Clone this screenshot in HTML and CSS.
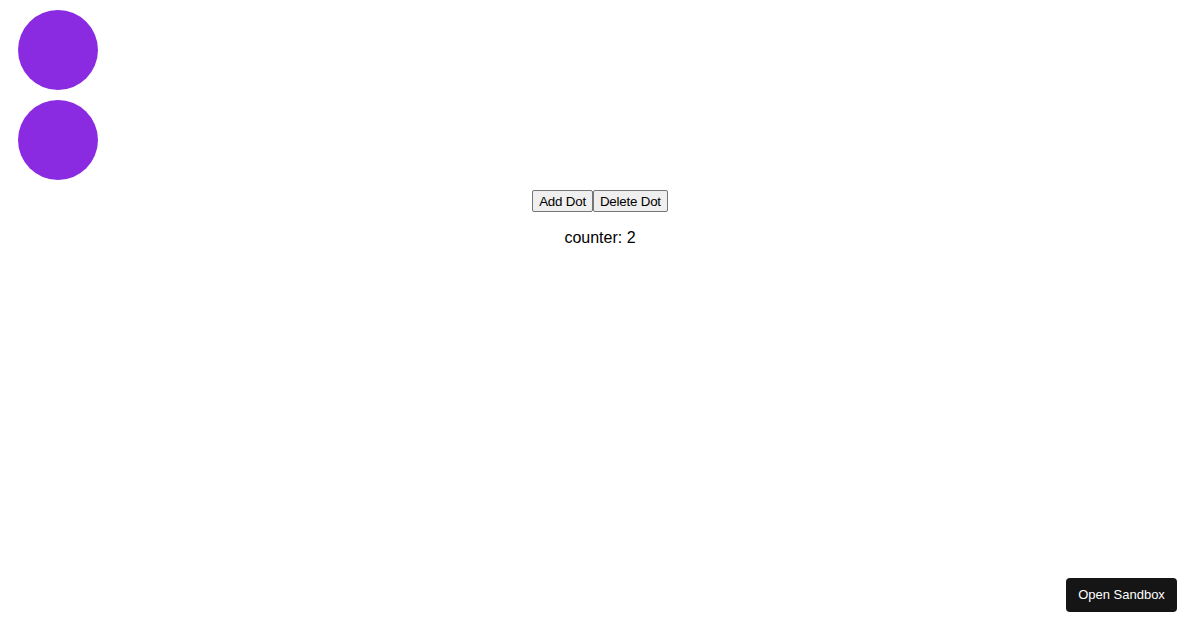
FILE: index.html
```html
<!DOCTYPE html>
<html>
<head>
<meta charset="utf-8">
<link rel="stylesheet" href="styles.css">
</head>
<body>
<div class="dot"></div>
<div class="dot"></div>
<div class="controls">
  <button class="btn">Add Dot</button><button class="btn">Delete Dot</button>
</div>
<p class="counter">counter: 2</p>
<a class="sandbox">Open Sandbox</a>
</body>
</html>
```
FILE: styles.css
```css
body {
  margin: 0 8px;
  padding-top: 0.1px;
  font-family: "Liberation Sans", Arial, sans-serif;
  background: #fff;
  color: #000;
}
.dot {
  width: 80px;
  height: 80px;
  border-radius: 50%;
  background: #8a2be2;
  margin: 10px;
}
.controls {
  text-align: center;
  height: 22px;
}
.btn {
  font-family: "Liberation Sans", Arial, sans-serif;
  font-size: 13.33px;
  letter-spacing: -0.2px;
  height: 22px;
  padding: 1px 6px;
  margin: 0;
  background: #efefef;
  border: 1px solid #767676;
  border-radius: 2px;
  color: #000;
  vertical-align: top;
}
.counter {
  text-align: center;
  font-size: 16px;
  margin: 17px 0 16px;
  line-height: 18px;
}
.sandbox {
  position: fixed;
  right: 23px;
  bottom: 18px;
  width: 111px;
  height: 34px;
  box-sizing: border-box;
  display: flex;
  align-items: center;
  justify-content: center;
  padding-bottom: 2px;
  background: #151515;
  color: #fff;
  font-size: 13px;
  border-radius: 4px;
}
```
